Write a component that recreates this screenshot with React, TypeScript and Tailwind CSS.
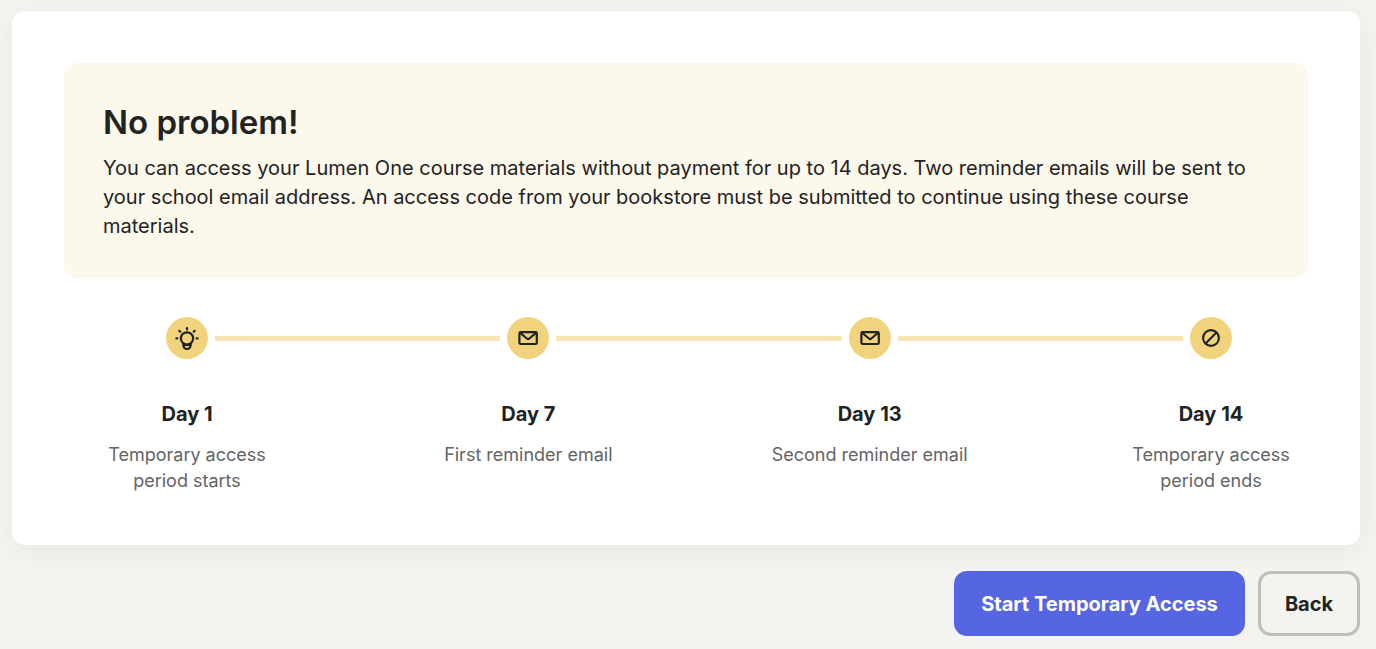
import React from 'react';

interface IconProps {
  className?: string;
}

const BulbIcon: React.FC<IconProps> = ({ className }) => (
  <svg className={className} viewBox="0 0 26 26" fill="none" stroke="currentColor" strokeWidth="2.2" strokeLinecap="round" strokeLinejoin="round">
    <circle cx="13" cy="13.4" r="6.1" />
    <path d="M9.4 18.6v1.8a3.6 3.6 0 0 0 7.2 0v-1.8" />
    <path d="M9.8 19.9h6.4" />
    <path d="M13 3.2v1.2M5.3 5.8l1 1M20.7 5.8l-1 1M2.4 13.4h.9M22.7 13.4h.9" />
  </svg>
);

const MailIcon: React.FC<IconProps> = ({ className }) => (
  <svg className={className} viewBox="0 0 26 26" fill="none" stroke="currentColor" strokeWidth="2.2" strokeLinecap="round" strokeLinejoin="round">
    <rect x="4.4" y="7.2" width="17.4" height="11.8" rx="1.3" />
    <path d="M5.2 7.9l6.7 5.6a1.8 1.8 0 0 0 2.4 0l6.7-5.6" />
  </svg>
);

const EndIcon: React.FC<IconProps> = ({ className }) => (
  <svg className={className} viewBox="0 0 26 26" fill="none" stroke="currentColor" strokeWidth="2.1" strokeLinecap="round">
    <circle cx="13" cy="13" r="7.9" />
    <path d="M7.6 18.5L18.4 7.5" />
  </svg>
);

const steps = [
  { day: 'Day 1', text: 'Temporary access period starts', icon: BulbIcon },
  { day: 'Day 7', text: 'First reminder email', icon: MailIcon },
  { day: 'Day 13', text: 'Second reminder email', icon: MailIcon },
  { day: 'Day 14', text: 'Temporary access period ends', icon: EndIcon },
];

const Timeline: React.FC = () => (
  <div className="mt-[39px]">
    <div className="ml-[102px] mr-[76px] flex items-center gap-[7px]" aria-hidden="true">
      {steps.map((step, index) => {
        const Icon = step.icon;
        return (
          <React.Fragment key={step.day}>
            {index > 0 && <div className="h-[5px] flex-1 bg-[#f8e5b3]" />}
            <div className="flex size-[42px] shrink-0 items-center justify-center rounded-full bg-[#f1d27d]">
              <Icon className="size-[26px]" />
            </div>
          </React.Fragment>
        );
      })}
    </div>
    <ol className="-mr-[3px] ml-[23px] mt-[42px] flex justify-between text-center">
      {steps.map((step) => (
        <li key={step.day} className="w-[200px]">
          <h2 className="text-[20px] font-bold leading-[26px]">{step.day}</h2>
          <p className="mt-[15px] text-[18px] leading-[26px] text-[#646464]">{step.text}</p>
        </li>
      ))}
    </ol>
  </div>
);

const App: React.FC = () => {
  return (
    <main className="min-h-screen bg-[#f4f3ef] px-4 pb-[13px] pl-3 pt-[11px] font-['Inter','Liberation_Sans',sans-serif] text-[#1e2324]">
      <section className="rounded-[13px] bg-white px-[52px] pb-[51px] pt-[52px] shadow-[0_6px_26px_rgba(30,50,45,0.06)]">
        <div className="rounded-[13px] bg-[#fcf8eb] px-[39px] pb-[37px] pt-[39px]">
          <h1 className="text-[33px] font-semibold leading-10">No problem!</h1>
          <p className="mt-3 text-[20px] leading-[29px]">
            You can access your Lumen One course materials without payment for up to 14 days. Two reminder emails will be
            sent to your school email address. An access code from your bookstore must be submitted to continue using
            these course materials.
          </p>
        </div>
        <Timeline />
      </section>
      <div className="mt-[26px] flex justify-end gap-[13px] text-[20px] font-bold">
        <button type="button" className="h-[65px] w-[291px] rounded-[13px] bg-[#5666e3] text-white">
          Start Temporary Access
        </button>
        <button type="button" className="h-[65px] w-[102px] rounded-[13px] border-[3px] border-[#bfbeb9]">
          Back
        </button>
      </div>
    </main>
  );
};

export default App;
